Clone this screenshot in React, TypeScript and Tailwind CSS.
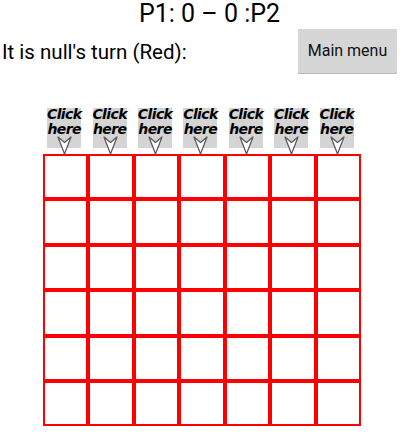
const COLS = 7
const ROWS = 6

function DropButton() {
  return (
    <div className="relative flex h-[40px] w-[34px] justify-center bg-[#d4d4d4]">
      <span
        className="-mt-[1px] text-center text-[14px] font-bold italic leading-[15px] tracking-[-0.6px] text-black"
        style={{ fontFamily: '"DejaVu Sans", sans-serif' }}
      >
        Click
        <br />
        here
      </span>
      <svg
        className="absolute left-[10px] top-[28px]"
        width="15"
        height="19"
        viewBox="0 0 15 19"
      >
        <path d="M1 1 L7.5 6.5 L14 1 L7.5 18 Z" fill="#fff" stroke="#555" strokeWidth="1.2" strokeLinejoin="round" />
      </svg>
    </div>
  )
}

export default function App() {
  return (
    <div className="h-[440px] w-[419px] bg-white text-black" style={{ fontFamily: 'Roboto, sans-serif' }}>
      <div className="text-center text-[25px] leading-[28px]">P1: 0 – 0 :P2</div>
      <div className="flex items-start justify-between">
        <span className="mt-[11px] pl-[2px] text-[20.5px] leading-[26px]">It is null's turn (Red):</span>
        <button className="mr-[22px] mt-[1px] h-[45px] w-[99px] border-b border-[#b8b8b8] bg-[#d6d6d6] text-[16px] text-[#111]">
          Main menu
        </button>
      </div>

      <div className="ml-[43px] mt-[34px] w-[318px]">
        <div className="relative z-10 grid grid-cols-7">
          {Array.from({ length: COLS }).map((_, i) => (
            <div key={i} className="flex justify-center pr-[3px]">
              <DropButton />
            </div>
          ))}
        </div>
        <div className="mt-[6px] grid grid-cols-7">
          {Array.from({ length: COLS * ROWS }).map((_, i) => (
            <div key={i} className="h-[45.4px] border-2 border-[#f00] bg-white" />
          ))}
        </div>
      </div>
    </div>
  )
}
